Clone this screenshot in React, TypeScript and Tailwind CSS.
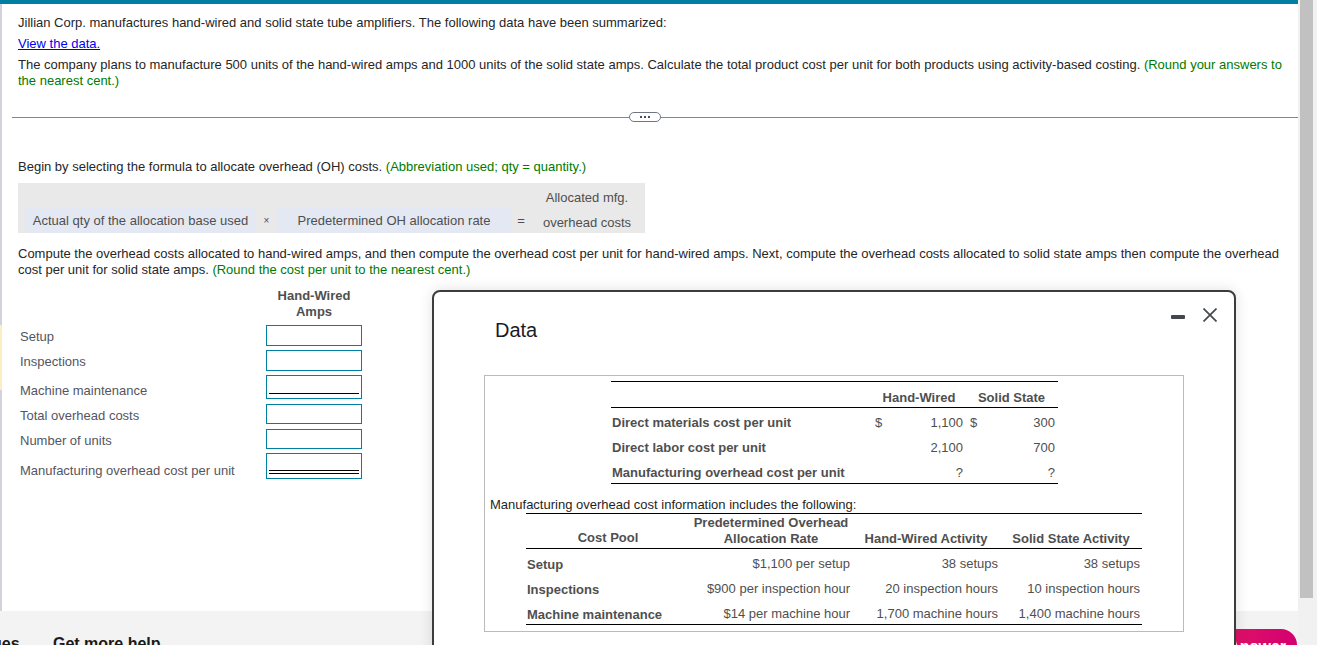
import React from 'react';

const font = { fontFamily: '"Liberation Sans", Arial, sans-serif' };

const ROWS = [
  { label: 'Setup', box: 'h-[21px]', gap: 'mt-0', pad: 'pb-[1px]', lines: 0 },
  { label: 'Inspections', box: 'h-[21px]', gap: 'mt-[4px]', pad: 'pb-[1px]', lines: 0 },
  { label: 'Machine maintenance', box: 'h-[24px]', gap: 'mt-[4px]', pad: 'pb-0', lines: 1 },
  { label: 'Total overhead costs', box: 'h-[20px]', gap: 'mt-[5px]', pad: 'pb-0', lines: 0 },
  { label: 'Number of units', box: 'h-[20px]', gap: 'mt-[5px]', pad: 'pb-0', lines: 0 },
  { label: 'Manufacturing overhead cost per unit', box: 'h-[26px]', gap: 'mt-[4px]', pad: 'pb-0', lines: 2 },
];

const COSTS = [
  { label: 'Direct materials cost per unit', a: '1,100', b: '300', dollar: true },
  { label: 'Direct labor cost per unit', a: '2,100', b: '700', dollar: false },
  { label: 'Manufacturing overhead cost per unit', a: '?', b: '?', dollar: false },
];

const POOLS = [
  { name: 'Setup', rate: '$1,100 per setup', hand: '38 setups', solid: '38 setups' },
  { name: 'Inspections', rate: '$900 per inspection hour', hand: '20 inspection hours', solid: '10 inspection hours' },
  { name: 'Machine maintenance', rate: '$14 per machine hour', hand: '1,700 machine hours', solid: '1,400 machine hours' },
];

const AnswerBox = ({ box, lines }: { box: string; lines: number }) => (
  <div className={`w-[96px] ${box} border border-[#007fa3] px-[2px] pb-[4px] flex flex-col justify-end gap-[2px]`}>
    {lines > 0 && <div className="h-[1px] bg-black" />}
    {lines > 1 && <div className="h-[1px] bg-black" />}
  </div>
);

const DataModal = () => (
  <div className="absolute left-[432px] top-[290px] w-[804px] h-[400px] bg-white border-2 border-[#3c3c3c] rounded-[8px] shadow-[0_0_14px_rgba(0,0,0,0.12)]">
    <div className="flex items-start justify-between h-[83px] pl-[61px] pr-[17px]">
      <h2 className="pt-[24px] text-[20px] leading-[28px] text-[#1a1a2a]">Data</h2>
      <div className="flex items-center gap-[18px] pt-[16px]">
        <div className="w-[14px] h-[4px] mt-[3px] rounded-[1px] bg-[#44484d]" />
        <svg width="14" height="14" viewBox="0 0 14 14" fill="none" stroke="#44484d" strokeWidth="1.7">
          <path d="M0.5 0.5 L13.5 13.5 M13.5 0.5 L0.5 13.5" />
        </svg>
      </div>
    </div>

    <div className="ml-[50px] w-[700px] border border-[#bbbbbb] pt-[5px] pb-[6px] text-[#4f4f4f]">
      <div className="ml-[126px] w-[447px] border-t border-black">
        <div className="flex border-b border-black font-bold pt-[8px] pb-[1px]">
          <div className="w-[262px]" />
          <div className="w-[92px] text-center">Hand-Wired</div>
          <div className="w-[93px] text-center">Solid State</div>
        </div>
        <div className="border-b border-black">
          {COSTS.map((row) => (
            <div key={row.label} className="flex pt-[7px] pb-[2px]">
              <div className="w-[262px] pl-[1px] font-bold">{row.label}</div>
              <div className="w-[92px] flex justify-between pl-[2px] pr-[2px]">
                <span>{row.dollar ? '$' : ''}</span>
                <span>{row.a}</span>
              </div>
              <div className="w-[93px] flex justify-between pl-[5px] pr-[3px]">
                <span>{row.dollar ? '$' : ''}</span>
                <span>{row.b}</span>
              </div>
            </div>
          ))}
        </div>
      </div>

      <p className="ml-[5px] mt-[13px] text-[#1f1f1f]">Manufacturing overhead cost information includes the following:</p>

      <div className="ml-[41px] w-[616px] border-t border-black">
        <div className="flex items-end border-b border-black font-bold pt-[1px] pb-[1px]">
          <div className="w-[164px] pb-[1px] text-center">Cost Pool</div>
          <div className="w-[162px] text-center">
            Predetermined Overhead
            <br />
            Allocation Rate
          </div>
          <div className="w-[148px] text-center">Hand-Wired Activity</div>
          <div className="w-[142px] text-center">Solid State Activity</div>
        </div>
        <div className="border-b border-black">
          {POOLS.map((row) => (
            <div key={row.name} className="flex pt-[7px] pb-[2px] text-right">
              <div className="w-[164px] pl-[1px] pt-[1px] h-[16px] font-bold text-left">{row.name}</div>
              <div className="w-[162px] pr-[2px]">{row.rate}</div>
              <div className="w-[148px] pr-[2px]">{row.hand}</div>
              <div className="w-[142px] pr-[2px]">{row.solid}</div>
            </div>
          ))}
        </div>
      </div>
    </div>
  </div>
);

export default function App() {
  return (
    <div style={font} className="relative w-[1317px] h-[645px] overflow-hidden flex bg-white text-[13px] leading-[16px] text-[#262626]">
      <div className="w-[1298px] flex flex-col">
        <div className="h-[4px] bg-[#007fa3]" />
        <div className="h-[607px] flex">
          <div className="w-[2px] flex flex-col">
            <div className="h-[321px] bg-[#d3d3de]" />
            <div className="h-[65px] bg-[#fbeec2]" />
            <div className="flex-1 bg-[#d3d3de]" />
          </div>
          <div className="flex-1 pl-[16px] pt-[11px]">
            <p>Jillian Corp. manufactures hand-wired and solid state tube amplifiers. The following data have been summarized:</p>
            <a className="block mt-[5px] text-[#0000ee] underline w-fit">View the data.</a>
            <p className="mt-[5px] pr-[10px]">
              The company plans to manufacture 500 units of the hand-wired amps and 1000 units of the solid state amps. Calculate the total product cost per unit for both products using activity-based costing.{' '}
              <span className="text-[#007a00]">(Round your answers to the nearest cent.)</span>
            </p>

            <div className="flex items-center -ml-[6px] mt-[23px] h-[10px]">
              <div className="w-[617px] h-[1px] bg-[#7f8790]" />
              <div className="w-[32px] h-[10px] border border-[#6e7781] rounded-[5px] flex items-center justify-center gap-[2px]">
                <span className="w-[2px] h-[2px] bg-[#4a5058]" />
                <span className="w-[2px] h-[2px] bg-[#4a5058]" />
                <span className="w-[2px] h-[2px] bg-[#4a5058]" />
              </div>
              <div className="flex-1 h-[1px] bg-[#7f8790]" />
            </div>

            <p className="mt-[37px]">
              Begin by selecting the formula to allocate overhead (OH) costs. <span className="text-[#007a00]">(Abbreviation used; qty = quantity.)</span>
            </p>

            <div className="mt-[8px] w-[627px] h-[50px] pl-[7px] bg-[#e9e9e9] flex items-end text-[#4f4f4f]">
              <div className="w-[231px] h-[25px] bg-[#e3e8f2] flex items-center justify-center">Actual qty of the allocation base used</div>
              <div className="w-[21px] h-[25px] flex items-center justify-center text-[10px]">×</div>
              <div className="w-[234px] h-[25px] bg-[#e3e8f2] flex items-center justify-center">Predetermined OH allocation rate</div>
              <div className="w-[20px] h-[25px] flex items-center justify-center">=</div>
              <div className="w-[112px] h-[50px] flex flex-col items-center pt-[7px] gap-[9px]">
                <span>Allocated mfg.</span>
                <span>overhead costs</span>
              </div>
            </div>

            <p className="mt-[13px] pr-[10px]">
              Compute the overhead costs allocated to hand-wired amps, and then compute the overhead cost per unit for hand-wired amps. Next, compute the overhead costs allocated to solid state amps then compute the overhead cost per unit for solid state amps.{' '}
              <span className="text-[#007a00]">(Round the cost per unit to the nearest cent.)</span>
            </p>

            <div className="mt-[10px] ml-[248px] w-[96px] h-[37px] text-center font-bold text-[#4f4f4f]">
              Hand-Wired
              <br />
              Amps
            </div>

            {ROWS.map((row) => (
              <div key={row.label} className={`flex items-end ${row.gap}`}>
                <div className={`w-[248px] pl-[2px] text-[#55555f] ${row.pad}`}>{row.label}</div>
                <AnswerBox box={row.box} lines={row.lines} />
              </div>
            ))}
          </div>
        </div>
        <div className="h-[34px] bg-[#f3f3f3] flex items-start">
          <span className="-ml-[8px] mt-[23px] w-[61px] text-[16px] leading-[20px] font-bold text-[#1a1a1a]">ues</span>
          <span className="mt-[23px] text-[16px] leading-[20px] font-bold text-[#1a1a1a]">Get more help</span>
          <div className="ml-auto mr-[1px] mt-[18px] w-[120px] h-[40px] pt-[8px] pr-[11px] text-right rounded-tr-[16px] bg-linear-to-r from-[#e81a62] to-[#d4006f] text-[16px] leading-[20px] font-bold text-white">
            Answer
          </div>
        </div>
      </div>

      <div className="w-[19px] pl-[2px] pr-[4px] bg-[#f1f1f1]">
        <div className="h-[598px] bg-[#c1c1c1]" />
      </div>

      <DataModal />
    </div>
  );
}
